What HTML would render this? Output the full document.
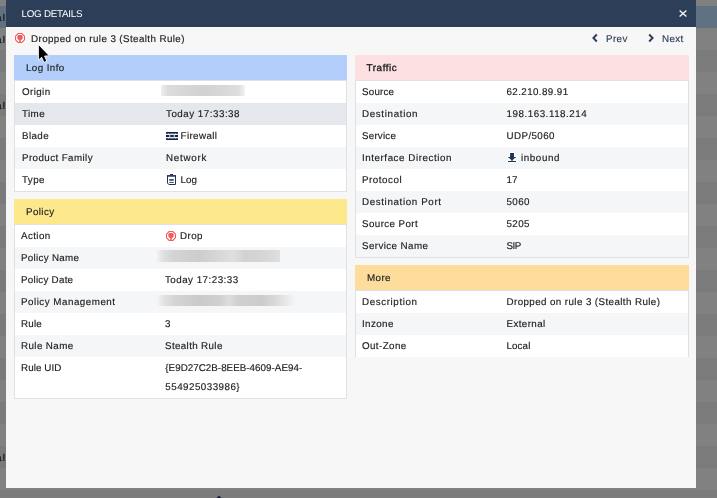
<!DOCTYPE html>
<html><head><meta charset="utf-8">
<style>
*{box-sizing:border-box;margin:0;padding:0}
html,body{width:717px;height:498px;overflow:hidden}
body{position:relative;background:#7f7f7f;font-family:"Liberation Sans",sans-serif;font-size:9.8px;color:#1c1c1c;letter-spacing:.4px;text-rendering:geometricPrecision;-webkit-text-stroke-width:.15px}
.bg{position:absolute;left:0;width:717px;height:22px}
.bgt{position:absolute;left:-4.3px;font-size:9.8px;line-height:14px;color:#0c0c0c;letter-spacing:1.2px;will-change:transform;-webkit-text-stroke-width:.2px}
#dlg{will-change:transform;position:absolute;left:6px;top:0;width:690px;height:488px;background:#f7f7f7}
#hd{position:absolute;left:0;top:0;width:690px;height:27px;background:#2d3e58}
#ttl{-webkit-text-stroke-width:0;position:absolute;left:15.5px;top:1px;line-height:27px;color:#fff;font-size:9.8px;letter-spacing:-.25px}
.panel{position:absolute;border:1px solid #dee2e8;border-top:none;background:#fff}
.ph{position:absolute;left:-1px;top:0;height:25px;line-height:25px;padding-top:1px;padding-left:12px;color:#222}
.row{position:relative;min-height:22px;line-height:18px;padding:3px 0 1px}
.row.a{background:#f5f6f8}
.row.s{background:#e4e7ec}
.l{position:absolute;left:7px;top:3px;white-space:nowrap}
.v{display:block;margin-left:151px;white-space:nowrap}
.p2 .l{left:6px}.p2 .v{margin-left:150px}.p3 .l{left:6px}.p3 .v{margin-left:150.5px}
.abs{position:absolute}
.ic{position:absolute;left:0;top:0}
.blur{position:absolute;border-radius:1px}
</style></head><body>
<!-- background stripes -->
<div class="bg" style="top:0;height:6px;background:#808080"></div>
<div class="bg" style="top:6px;height:22px;background:#607281"></div>
<div class="bg" style="top:28px;background:#818181"></div><div class="bg" style="top:50px;background:#7b7b7b"></div><div class="bg" style="top:72px;background:#818181"></div><div class="bg" style="top:94px;background:#7b7b7b"></div><div class="bg" style="top:116px;background:#818181"></div><div class="bg" style="top:138px;background:#7b7b7b"></div><div class="bg" style="top:160px;background:#818181"></div><div class="bg" style="top:182px;background:#7b7b7b"></div><div class="bg" style="top:204px;background:#818181"></div><div class="bg" style="top:226px;background:#7b7b7b"></div><div class="bg" style="top:248px;background:#818181"></div><div class="bg" style="top:270px;background:#7b7b7b"></div><div class="bg" style="top:292px;background:#818181"></div><div class="bg" style="top:314px;background:#7b7b7b"></div><div class="bg" style="top:336px;background:#818181"></div><div class="bg" style="top:358px;background:#7b7b7b"></div><div class="bg" style="top:380px;background:#818181"></div><div class="bg" style="top:402px;background:#7b7b7b"></div><div class="bg" style="top:424px;background:#818181"></div><div class="bg" style="top:446px;background:#7b7b7b"></div><div class="bg" style="top:468px;background:#818181"></div><div class="bg" style="top:490px;background:#7b7b7b"></div>
<div class="bgt" style="top:11.5px">al</div>
<div class="bgt" style="top:33.5px">al</div>
<div class="bgt" style="top:99.5px">al</div>
<div class="bgt" style="top:451.5px">al</div>

<div id="dlg">
 <div id="hd"><div id="ttl">LOG DETAILS</div>
  <svg class="abs" style="left:672px;top:8px" width="10" height="10" viewBox="0 0 10 10"><path d="M1.6 2.4L8.4 8.6M8.4 2.4L1.6 8.6" stroke="#f4f6f9" stroke-width="1.35" fill="none"/></svg>
 </div>
 <!-- title row -->
 <svg class="abs" style="left:9px;top:33px" width="10" height="10" viewBox="0 0 10 10"><path d="M3.2 .5H6.8L9.5 3.2V6.8L6.8 9.5H3.2L.5 6.8V3.2Z" fill="#fff" stroke="#f15c5d" stroke-width="1.15"/><path d="M3.4 2.1H6.6L7.7 3.2V5.6L6.6 6.8L5.8 7.2V9.3H4.2V7.2L3.4 6.8L2.3 5.6V3.2Z" fill="#f15c5d"/></svg>
 <div class="abs" style="left:25px;top:31px;line-height:18px;white-space:nowrap">Dropped on rule 3 (Stealth Rule)</div>
 <div class="abs" style="left:600px;top:31px;line-height:18px;color:#2d3e58">Prev</div>
 <div class="abs" style="left:656px;top:31px;line-height:18px;color:#2d3e58">Next</div>
 <svg class="abs" style="left:585px;top:33px" width="8" height="10" viewBox="0 0 8 10"><path d="M5.8 1.5L2.4 5L5.8 8.5" stroke="#2d3e58" stroke-width="1.9" fill="none"/></svg>
 <svg class="abs" style="left:641px;top:33px" width="8" height="10" viewBox="0 0 8 10"><path d="M2.2 1.5L5.6 5L2.2 8.5" stroke="#2d3e58" stroke-width="1.9" fill="none"/></svg>

 <!-- Log Info -->
 <div class="panel" style="left:8px;top:55px;width:333px;padding-top:25px">
  <div class="ph" style="width:333px;background:#b4cefc">Log Info</div>
  <div style="border-top:1px solid #dee2e8">
  <div class="row"><span class="l">Origin</span><span class="v">&nbsp;</span><div class="blur" style="left:146px;top:4px;width:84px;height:11px;background:linear-gradient(90deg,#efefef,#dcdcdc 8%,#d6d6d6 30%,#d2d2d2 50%,#d8d8d8 75%,#dedede 92%,#f2f2f2)"></div></div>
  <div class="row s"><span class="l">Time</span><span class="v" style="letter-spacing:.5px">Today 17:33:38</span></div>
  <div class="row"><span class="l">Blade</span><svg class="abs" style="left:151px;top:7px" width="12" height="8" viewBox="0 0 12 8"><g fill="#14254a"><rect x="0" y="0" width="12" height="1.4"/><rect x="0" y="1.4" width="2.2" height=".7"/><rect x="2.9" y="1.4" width="2.8" height=".7"/><rect x="6.4" y="1.4" width="2.8" height=".7"/><rect x="9.9" y="1.4" width="2.1" height=".7"/><rect x="0" y="3" width="3.3" height="2"/><rect x="4.2" y="3" width="3.6" height="2"/><rect x="8.7" y="3" width="3.3" height="2"/><rect x="0" y="6.6" width="12" height="1.4"/><rect x="0" y="5.9" width="2.2" height=".7"/><rect x="2.9" y="5.9" width="2.8" height=".7"/><rect x="6.4" y="5.9" width="2.8" height=".7"/><rect x="9.9" y="5.9" width="2.1" height=".7"/></g></svg><span class="v" style="padding-left:14.5px">Firewall</span></div>
  <div class="row a"><span class="l">Product Family</span><span class="v" style="letter-spacing:0.75px">Network</span></div>
  <div class="row"><span class="l">Type</span><svg class="abs" style="left:152px;top:5px" width="9" height="11" viewBox="0 0 9 11"><g fill="none" stroke="#1c3256"><path d="M.5 1.8V9L1.8 10.5H8.5V1.8" stroke-width="1"/><path d="M0 1.9H9" stroke-width="1.6"/><path d="M3 .6H6" stroke-width="1.2"/><path d="M2.2 5.9H6.8" stroke-width="1.5"/><path d="M2.2 8.4H6.8" stroke-width=".9"/></g></svg><span class="v" style="padding-left:14.5px;letter-spacing:0">Log</span></div>
  </div>
 </div>
 <!-- Policy -->
 <div class="panel p2" style="left:8px;top:199px;width:333px;padding-top:25px">
  <div class="ph" style="width:333px;background:#fde88c">Policy</div>
  <div style="border-top:1px solid #dee2e8">
  <div class="row"><span class="l">Action</span><svg class="abs" style="left:151px;top:6px" width="10" height="10" viewBox="0 0 10 10"><path d="M3.2 .5H6.8L9.5 3.2V6.8L6.8 9.5H3.2L.5 6.8V3.2Z" fill="#fff" stroke="#f15c5d" stroke-width="1.15"/><path d="M3.4 2.1H6.6L7.7 3.2V5.6L6.6 6.8L5.8 7.2V9.3H4.2V7.2L3.4 6.8L2.3 5.6V3.2Z" fill="#f15c5d"/></svg><span class="v" style="padding-left:15px">Drop</span></div>
  <div class="row a"><span class="l" style="letter-spacing:0.3px">Policy Name</span><span class="v">&nbsp;</span><div class="blur" style="left:141px;top:3px;width:124px;height:12px;background:linear-gradient(90deg,#f5f6f9,#dfdfdf 6%,#d3d3d3 15%,#cdcdcd 35%,#d8d8d8 52%,#dfdfdf 62%,#d2d2d2 72%,#d6d6d6 88%,#dfdfdf)"></div></div>
  <div class="row"><span class="l" style="letter-spacing:0.25px">Policy Date</span><span class="v" style="letter-spacing:.47px">Today 17:23:33</span></div>
  <div class="row a"><span class="l" style="letter-spacing:.5px">Policy Management</span><span class="v">&nbsp;</span><div class="blur" style="left:142px;top:4px;width:139px;height:11px;background:linear-gradient(90deg,#f5f6f9,#e2e2e2 5%,#d4d4d4 13%,#cacaca 30%,#d0d0d0 45%,#dddddd 52%,#d0d0d0 58%,#cccccc 75%,#dadada 86%,#f5f6f9)"></div></div>
  <div class="row"><span class="l" style="letter-spacing:0.2px">Rule</span><span class="v">3</span></div>
  <div class="row a"><span class="l">Rule Name</span><span class="v" style="margin-left:150px;letter-spacing:.36px">Stealth Rule</span></div>
  <div class="row" style="padding-bottom:2px"><span class="l" style="letter-spacing:0.1px">Rule UID</span><span class="v" style="letter-spacing:.03px;margin-left:150.3px">{E9D27C2B-8EEB-4609-AE94-<br><span style="position:relative;top:1px;letter-spacing:.47px">554925033986}</span></span></div>
  </div>
 </div>
 <!-- Traffic -->
 <div class="panel p3" style="left:349px;top:55px;width:334px;padding-top:25px">
  <div class="ph" style="width:334px;background:#fde0e1;padding-left:11.5px;-webkit-text-stroke-width:.35px;letter-spacing:.6px">Traffic</div>
  <div style="border-top:1px solid #dee2e8">
  <div class="row"><span class="l" style="letter-spacing:0.2px">Source</span><span class="v">62.210.89.91</span></div>
  <div class="row a"><span class="l" style="letter-spacing:0.65px">Destination</span><span class="v" style="letter-spacing:0.53px">198.163.118.214</span></div>
  <div class="row"><span class="l" style="letter-spacing:0.2px">Service</span><span class="v">UDP/5060</span></div>
  <div class="row a"><span class="l" style="letter-spacing:0.55px">Interface Direction</span><svg class="abs" style="left:151px;top:5px" width="10" height="11" viewBox="0 0 10 11"><g fill="#1f3358" stroke="#fff" stroke-width="1.6" paint-order="stroke"><path d="M3.3 1H6.8V5H9L5 8.6L1 5H3.3Z"/><rect x="1" y="9" width="8" height="1"/></g><g fill="#1f3358"><path d="M3.3 1H6.8V5H9V5.6H7.6L5 8.6L2.4 5.6H1V5H3.3Z"/><rect x="1" y="9" width="8" height="1"/><rect x="4.5" y="8" width="1" height="1.5"/></g></svg><span class="v" style="padding-left:14.5px;letter-spacing:.6px">inbound</span></div>
  <div class="row"><span class="l" style="letter-spacing:0.52px">Protocol</span><span class="v" style="letter-spacing:0px">17</span></div>
  <div class="row a"><span class="l" style="letter-spacing:0.62px">Destination Port</span><span class="v">5060</span></div>
  <div class="row"><span class="l">Source Port</span><span class="v">5205</span></div>
  <div class="row a"><span class="l">Service Name</span><span class="v" style="letter-spacing:-0.5px">SIP</span></div>
  </div>
 </div>
 <!-- More -->
 <div class="panel p3" style="left:349px;top:265px;width:334px;padding-top:25px;border-bottom:none">
  <div class="ph" style="width:334px;background:#fedc9c">More</div>
  <div style="border-top:1px solid #dee2e8">
  <div class="row"><span class="l" style="letter-spacing:0.6px">Description</span><span class="v">Dropped on rule 3 (Stealth Rule)</span></div>
  <div class="row a"><span class="l">Inzone</span><span class="v">External</span></div>
  <div class="row"><span class="l">Out-Zone</span><span class="v" style="letter-spacing:0.1px">Local</span></div>
  </div>
 </div>
</div>
<svg class="abs" style="left:214px;top:494px" width="10" height="4" viewBox="0 0 10 4"><path d="M5 1.4L8 4.4H2Z" fill="#14203a"/></svg>
<svg class="abs" style="left:36px;top:42px" width="16" height="22" viewBox="36 42 16 22"><path d="M38.4 44.4V60.2L41.7 57.3L43.9 62.4L46.8 61.1L44.6 56.1L49.3 55.8Z" fill="#000" stroke="#fff" stroke-width=".9" stroke-linejoin="round"/></svg>
</body></html>
